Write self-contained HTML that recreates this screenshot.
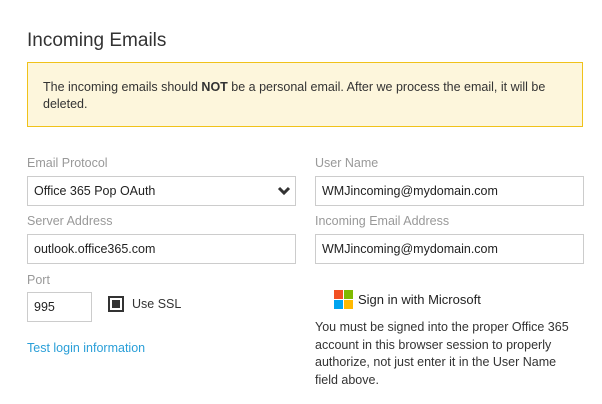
<!DOCTYPE html>
<html><head><style>
body{margin:0;width:602px;height:404px;background:#fff;font-family:"Liberation Sans",sans-serif;color:#333;position:relative;overflow:hidden}
.a{position:absolute}
h1{position:absolute;left:27px;top:30px;margin:0;font-size:19px;font-weight:normal;color:#333}
.note{left:27px;top:62px;width:554px;height:63px;border:1px solid #f0c21a;background:#fdf6dc;font-size:12.5px;line-height:17px;}
.note div{position:absolute;left:15px;top:16px;width:525px}
.lbl{font-size:12.5px;color:#999}
.in{border:1px solid #ccc;box-sizing:border-box;height:30px;font-size:12.5px;line-height:28px;padding-left:6px;color:#222}
.p{font-size:12.5px;line-height:17.5px;color:#333;white-space:nowrap}
</style></head><body>
<h1>Incoming Emails</h1>
<div class="a note"><div>The incoming emails should <b>NOT</b> be a personal email. After we process the email, it will be deleted.</div></div>

<div class="a lbl" style="left:27px;top:156px">Email Protocol</div>
<div class="a in" style="left:27px;top:176px;width:269px">Office 365 Pop OAuth
<svg class="a" style="left:249px;top:9px" width="14" height="10" viewBox="0 0 14 10"><path d="M2 2L7 7L12 2" fill="none" stroke="#333" stroke-width="3"/></svg></div>
<div class="a lbl" style="left:27px;top:214px">Server Address</div>
<div class="a in" style="left:27px;top:234px;width:269px">outlook.office365.com</div>
<div class="a lbl" style="left:27px;top:273px">Port</div>
<div class="a in" style="left:27px;top:292px;width:65px">995</div>
<div class="a" style="left:108px;top:296px;border:2px solid #333;width:12px;height:12px"><div class="a" style="left:2px;top:2px;width:8px;height:8px;background:#333"></div></div>
<div class="a" style="left:132px;top:297px;font-size:12.5px">Use SSL</div>
<div class="a" style="left:27px;top:341px;font-size:12.5px;color:#2a9fd8">Test login information</div>

<div class="a lbl" style="left:315px;top:156px">User Name</div>
<div class="a in" style="left:315px;top:176px;width:269px">WMJincoming@mydomain.com</div>
<div class="a lbl" style="left:315px;top:214px">Incoming Email Address</div>
<div class="a in" style="left:315px;top:234px;width:269px">WMJincoming@mydomain.com</div>
<svg class="a" style="left:334px;top:290px" width="19" height="19" viewBox="0 0 19 19"><rect width="9" height="9" fill="#f25022"/><rect x="10" width="9" height="9" fill="#7fba00"/><rect y="10" width="9" height="9" fill="#00a4ef"/><rect x="10" y="10" width="9" height="9" fill="#ffb900"/></svg>
<div class="a" style="left:358px;top:292px;font-size:13px;color:#222">Sign in with Microsoft</div>
<div class="a p" style="left:315px;top:319px">You must be signed into the proper Office 365<br>account in this browser session to properly<br>authorize, not just enter it in the User Name<br>field above.</div>
</body></html>
